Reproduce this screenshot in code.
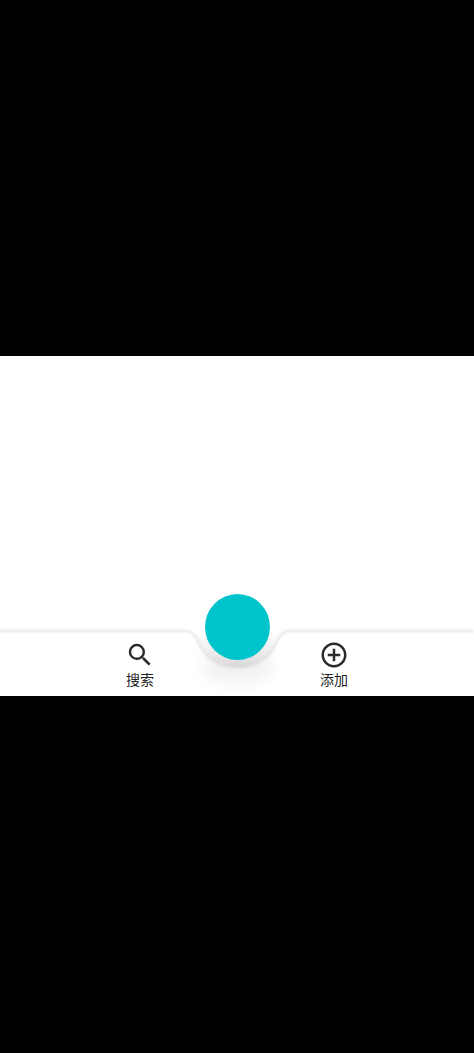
<div class="page">
  <div class="black top"></div>
  <section class="screen">
    <div class="spacer"></div>
    <nav class="bar">
      <button class="item">
        <svg viewBox="0 0 24 24" width="30" height="30"><path fill="#2b2b2b" d="M15.5 14h-.79l-.28-.27A6.471 6.471 0 0 0 16 9.5 6.5 6.5 0 1 0 9.5 16c1.61 0 3.09-.59 4.23-1.57l.27.28v.79l5 4.99L20.49 19l-4.99-5zm-6 0C7.01 14 5 11.99 5 9.5S7.01 5 9.5 5 14 7.01 14 9.5 11.99 14 9.5 14z"/></svg>
        <span>搜索</span>
      </button>
      <div class="gap"></div>
      <button class="item">
        <svg viewBox="0 0 24 24" width="30" height="30"><path fill="#2b2b2b" d="M13 7h-2v4H7v2h4v4h2v-4h4v-2h-4V7zm-1-5C6.48 2 2 6.48 2 12s4.48 10 10 10 10-4.480 10-10S17.520 2 12 2zm0 18c-4.410 0-8-3.590-8-8s3.590-8 8-8 8 3.590 8 8-3.590 8-8 8z"/></svg>
        <span>添加</span>
      </button>
    </nav>
    <svg class="notch" viewBox="0 0 474 76" width="474" height="76" aria-hidden="true">
      <defs>
        <linearGradient id="well" x1="0" y1="0" x2="0" y2="1">
          <stop offset="0" stop-color="#ffffff"/>
          <stop offset="0.5" stop-color="#efefef"/>
          <stop offset="1" stop-color="#d6d6d6"/>
        </linearGradient>
        <filter id="soft" x="-40%" y="-40%" width="180%" height="200%"><feGaussianBlur stdDeviation="8"/></filter>
        <filter id="edge" x="-5%" y="-50%" width="110%" height="200%"><feGaussianBlur stdDeviation="0.9"/></filter>
      </defs>
      <ellipse cx="237.500" cy="46" rx="36" ry="18" fill="#000" opacity="0.05" filter="url(#soft)"/>
      <path d="M186 11C195 11 197 20 201 28C208 41 222 48 237.500 48C253 48 267 41 274 28C278 20 280 11 289 11Z" fill="url(#well)"/>
      <path d="M0 11H186C195 11 197 20 201 28C208 41 222 48 237.500 48C253 48 267 41 274 28C278 20 280 11 289 11H474" fill="none" stroke="#e4e4e4" stroke-width="2" filter="url(#edge)"/>
    </svg>
    <div class="fab"></div>
  </section>
  <div class="black bottom"></div>
</div>

<style>
  :global(body) {
    margin: 0;
    background: #000;
  }
  .page {
    display: flex;
    flex-direction: column;
    width: 474px;
    height: 1053px;
    overflow: hidden;
  }
  .black {
    background: #000;
  }
  .top {
    height: 356px;
  }
  .bottom {
    flex: 1;
  }
  .screen {
    position: relative;
    display: flex;
    flex-direction: column;
    height: 340px;
    background: #fff;
    overflow: hidden;
  }
  .spacer {
    flex: 1;
  }
  .bar {
    position: relative;
    z-index: 1;
    display: grid;
    grid-template-columns: repeat(3, 97px);
    justify-content: center;
    height: 65px;
  }
  .item {
    display: flex;
    flex-direction: column;
    align-items: center;
    padding: 9px 0 0;
    border: 0;
    background: none;
    font-family: "Noto Sans CJK SC", sans-serif;
    font-size: 14px;
    line-height: 18px;
    color: #222;
  }
  .item svg {
    display: block;
  }
  .notch {
    position: absolute;
    left: 0;
    bottom: 0;
    display: block;
  }
  .fab {
    position: absolute;
    z-index: 2;
    left: 205px;
    top: 238px;
    width: 65px;
    height: 66px;
    border-radius: 50%;
    background: #00c4cc;
  }
</style>
